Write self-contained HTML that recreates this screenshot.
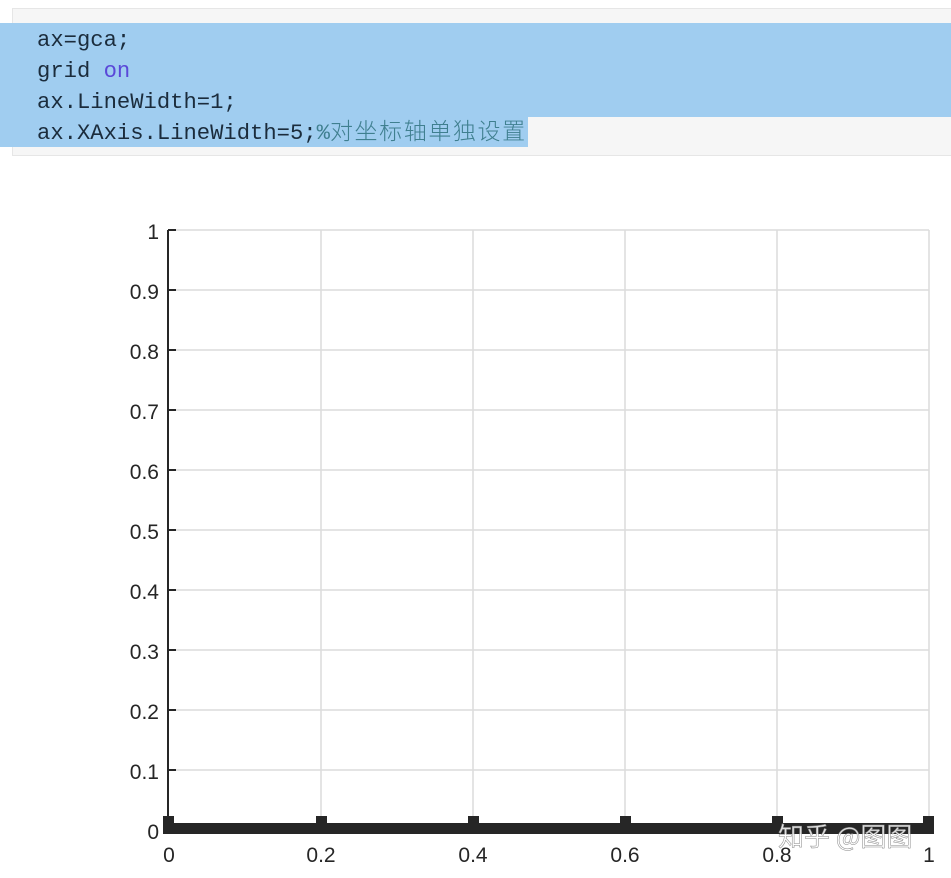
<!DOCTYPE html>
<html><head><meta charset="utf-8"><style>
body{margin:0;width:951px;height:878px;background:#fff;overflow:hidden;position:relative;font-family:"Liberation Sans",sans-serif}
.box{position:absolute;left:12px;top:8px;width:945px;height:146px;background:#f6f6f6;border:1px solid #e6e6e6}
.hl{position:absolute;background:#a0cdf0}
.code{position:absolute;left:37px;top:25px;font-family:"Liberation Mono","Noto Sans CJK SC",monospace;font-size:22.2px;line-height:31px;color:#1b2c3c;white-space:pre}
.code div{height:31px}
.kw{color:#5a48d8}.cm{color:#3f7f8f}
.cj{font-family:"Noto Sans CJK SC",sans-serif;font-size:23px;letter-spacing:1.6px;font-weight:300;line-height:10px}
svg{position:absolute;left:0;top:0}
</style></head><body>
<div class="box"></div>
<div class="hl" style="left:0;top:23px;width:951px;height:94px"></div>
<div class="hl" style="left:0;top:117px;width:528px;height:30px"></div>
<div class="code"><div>ax=gca;</div><div>grid <span class="kw">on</span></div><div>ax.LineWidth=1;</div><div>ax.XAxis.LineWidth=5;<span class="cm">%<span class="cj">对坐标轴单独设置</span></span></div></div>
<svg width="951" height="878">
<g stroke="#dcdcdc" stroke-width="1.5">
<line x1="168" y1="230" x2="929" y2="230"/><line x1="168" y1="290" x2="929" y2="290"/><line x1="168" y1="350" x2="929" y2="350"/><line x1="168" y1="410" x2="929" y2="410"/><line x1="168" y1="470" x2="929" y2="470"/><line x1="168" y1="530" x2="929" y2="530"/><line x1="168" y1="590" x2="929" y2="590"/><line x1="168" y1="650" x2="929" y2="650"/><line x1="168" y1="710" x2="929" y2="710"/><line x1="168" y1="770" x2="929" y2="770"/>
<line x1="321" y1="230" x2="321" y2="830"/><line x1="473" y1="230" x2="473" y2="830"/><line x1="625" y1="230" x2="625" y2="830"/><line x1="777" y1="230" x2="777" y2="830"/><line x1="929" y1="230" x2="929" y2="830"/>
</g>
<line x1="168" y1="230" x2="168" y2="830" stroke="#262626" stroke-width="2"/>
<g stroke="#262626" stroke-width="2">
<line x1="168" y1="230" x2="176" y2="230"/><line x1="168" y1="290" x2="176" y2="290"/><line x1="168" y1="350" x2="176" y2="350"/><line x1="168" y1="410" x2="176" y2="410"/><line x1="168" y1="470" x2="176" y2="470"/><line x1="168" y1="530" x2="176" y2="530"/><line x1="168" y1="590" x2="176" y2="590"/><line x1="168" y1="650" x2="176" y2="650"/><line x1="168" y1="710" x2="176" y2="710"/><line x1="168" y1="770" x2="176" y2="770"/>
</g>
<g fill="#262626">
<rect x="163" y="823" width="771" height="11"/>
<rect x="163" y="816" width="11" height="10"/><rect x="316" y="816" width="11" height="10"/><rect x="468" y="816" width="11" height="10"/><rect x="620" y="816" width="11" height="10"/><rect x="772" y="816" width="11" height="10"/><rect x="923" y="816" width="11" height="10"/>
</g>
<g font-family="Liberation Sans,sans-serif" font-size="21" fill="#262626" text-anchor="end">
<text x="159" y="239">1</text><text x="159" y="299">0.9</text><text x="159" y="359">0.8</text><text x="159" y="419">0.7</text><text x="159" y="479">0.6</text><text x="159" y="539">0.5</text><text x="159" y="599">0.4</text><text x="159" y="659">0.3</text><text x="159" y="719">0.2</text><text x="159" y="779">0.1</text><text x="159" y="839">0</text>
</g>
<g font-family="Liberation Sans,sans-serif" font-size="21" fill="#262626" text-anchor="middle">
<text x="169" y="862">0</text><text x="321" y="862">0.2</text><text x="473" y="862">0.4</text><text x="625" y="862">0.6</text><text x="777" y="862">0.8</text><text x="929" y="862">1</text>
</g>
<text x="778" y="846" font-family="Noto Sans CJK SC,sans-serif" font-size="26" fill="#fff" fill-opacity="0.85" stroke="#888" stroke-width="0.5">知乎 @图图</text>
</svg>
</body></html>
